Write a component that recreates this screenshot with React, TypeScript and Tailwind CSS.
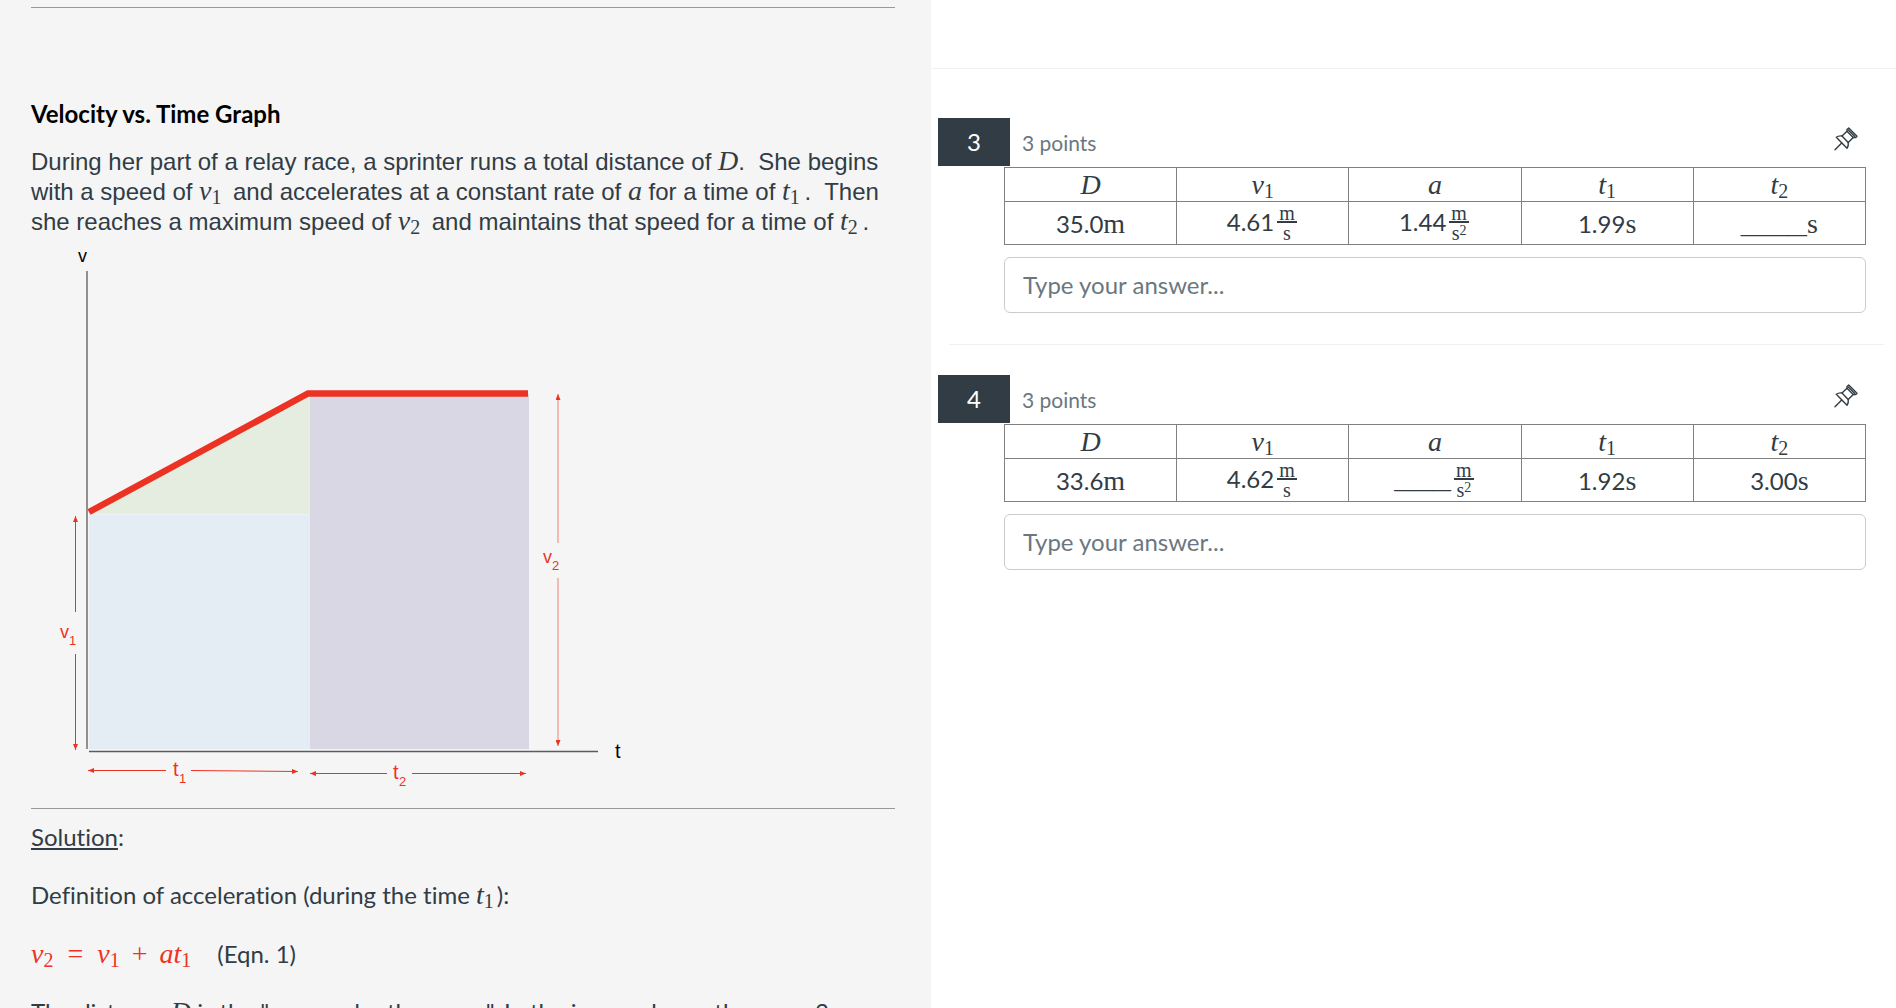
import { useState } from "react";
import type { ReactNode } from "react";

interface Question {
  number: number;
  points: number;
  values: ReactNode[];
}

function Sym({ name, sub }: { name: string; sub?: string }) {
  return (
    <span className="whitespace-nowrap font-['Liberation_Serif',serif] text-[28px] leading-none">
      <i>{name}</i>
      {sub && <span className="inline-block align-[-4px] text-xl leading-none">{sub}</span>}
    </span>
  );
}

function Unit({ children }: { children: ReactNode }) {
  return <span className="font-['Liberation_Serif',serif] text-[28px] leading-none">{children}</span>;
}

function Blank({ children }: { children: ReactNode }) {
  return <span className="font-['Liberation_Sans',sans-serif] text-[17px] leading-none">{children}</span>;
}

function Fraction({ top, bottom }: { top: ReactNode; bottom: ReactNode }) {
  return (
    <span className="mr-0.5 ml-[3px] inline-flex flex-col items-stretch pb-[3px] align-[11px] text-center font-['Liberation_Serif',serif] text-xl leading-4">
      <span className="border-b-2 border-[#313c45] px-0.5">{top}</span>
      <span className="pt-0.5">{bottom}</span>
    </span>
  );
}

const HEADERS = [
  <Sym name="D" />,
  <Sym name="v" sub="1" />,
  <Sym name="a" />,
  <Sym name="t" sub="1" />,
  <Sym name="t" sub="2" />,
];

const SECOND_SQUARED = (
  <>
    s<span className="inline-block align-[5px] text-sm leading-0">2</span>
  </>
);

const QUESTIONS: Question[] = [
  {
    number: 3,
    points: 3,
    values: [
      <>35.0<Unit>m</Unit></>,
      <>4.61<Fraction top="m" bottom="s" /></>,
      <>1.44<Fraction top="m" bottom={SECOND_SQUARED} /></>,
      <>1.99<Unit>s</Unit></>,
      <><Blank>_______</Blank><Unit>s</Unit></>,
    ],
  },
  {
    number: 4,
    points: 3,
    values: [
      <>33.6<Unit>m</Unit></>,
      <>4.62<Fraction top="m" bottom="s" /></>,
      <><Blank>______</Blank><Fraction top="m" bottom={SECOND_SQUARED} /></>,
      <>1.92<Unit>s</Unit></>,
      <>3.00<Unit>s</Unit></>,
    ],
  },
];

function PinIcon() {
  return (
    <svg
      width="24"
      height="24"
      viewBox="0 0 24 24"
      fill="none"
      stroke="currentColor"
      strokeWidth="1.4"
      strokeLinejoin="round"
      strokeLinecap="round"
      aria-hidden="true"
    >
      <path d="M1 22.7 7.7 16" />
      <path d="M2.3 10.3C4 9 6 8.7 8 9l6.2 6.4c.4 2.2 0 4.2-1.2 5.9z" />
      <path d="M8 9l5-4.7M14.2 15.4l5-4.9" />
      <path d="M14.7 1 23 9.2l-1.2 1.3h-2.6L13 4.3V2.6z" />
      <path d="M14.3 2.9l6.5 6.5" />
    </svg>
  );
}

function VelocityGraph() {
  return (
    <svg
      className="mt-[3px] block w-full max-w-[640px]"
      viewBox="31 240 640 560"
      role="img"
      aria-label="Velocity vs. time graph"
      fontFamily="Liberation Sans, sans-serif"
    >
      <defs>
        <marker id="arrow" markerUnits="userSpaceOnUse" markerWidth="6" markerHeight="5" refX="6" refY="2.5" orient="auto-start-reverse">
          <path d="M0 0 6 2.5 0 5z" fill="#ec3323" />
        </marker>
      </defs>

      <rect x="89" y="514" width="221" height="235" fill="#e5edf4" />
      <path d="M90 514 310 394V514z" fill="#e5ece0" />
      <path d="M89 514.5H310" stroke="#f0f2f2" />
      <rect x="310" y="394" width="219" height="355" fill="#d9d7e4" />
      <path d="M309.5 394V749" stroke="#ebebf0" />

      <path d="M87 271V749" stroke="#6e6e6e" strokeWidth="1.5" />
      <path d="M89 751.5H598" stroke="#5c5c5c" strokeWidth="1.3" />
      <path d="M89 512 308 393.5H528" fill="none" stroke="#ec3323" strokeWidth="6.5" />

      <g stroke="#ec3323" strokeWidth="1">
        <path d="M75.5 612V516" markerEnd="url(#arrow)" />
        <path d="M75.5 654V750" markerEnd="url(#arrow)" />
        <path d="M558 543V394" strokeOpacity="0.6" markerEnd="url(#arrow)" />
        <path d="M558 578V746" strokeOpacity="0.6" markerEnd="url(#arrow)" />
        <path d="M166 770.5H88" markerEnd="url(#arrow)" />
        <path d="M191 770.5 298 771.5" markerEnd="url(#arrow)" />
        <path d="M387 773.5H310" markerEnd="url(#arrow)" />
        <path d="M412 773.5H526" markerEnd="url(#arrow)" />
      </g>

      <text x="78" y="262" fontSize="18">v</text>
      <text x="615" y="758" fontSize="20">t</text>

      <g fill="#ec3323">
        <text x="60" y="638" fontSize="18">v</text>
        <text x="69" y="645" fontSize="13">1</text>
        <text x="543" y="563" fontSize="18">v</text>
        <text x="552" y="570" fontSize="13">2</text>
        <text x="173" y="776" fontSize="20">t</text>
        <text x="179" y="783" fontSize="13">1</text>
        <text x="393" y="779" fontSize="20">t</text>
        <text x="399" y="786" fontSize="13">2</text>
      </g>
    </svg>
  );
}

function QuestionCard({ question }: { question: Question }) {
  const [answer, setAnswer] = useState("");
  const [pinned, setPinned] = useState(false);

  return (
    <article className="pl-[7px]">
      <header className="flex items-center">
        <h2 className="flex h-12 w-[72px] items-center justify-center bg-[#313c45] text-2xl text-white">
          {question.number}
        </h2>
        <span className="ml-3 pt-0.5 text-[21px] leading-7 text-[#6b7780]">{question.points} points</span>
        <button
          type="button"
          className="mr-[38px] mb-1.5 ml-auto cursor-pointer"
          aria-label="Pin question"
          aria-pressed={pinned}
          onClick={() => setPinned(!pinned)}
        >
          <PinIcon />
        </button>
      </header>
      <div className="mt-px mr-[30px] ml-[66px]">
        <table className="w-full table-fixed border-collapse text-center">
          <thead>
            <tr className="h-[34px]">
              {HEADERS.map((header, i) => (
                <th key={i} className="border border-[#808080] p-0 font-normal leading-8">
                  {header}
                </th>
              ))}
            </tr>
          </thead>
          <tbody>
            <tr className="h-[43px]">
              {question.values.map((value, i) => (
                <td key={i} className="border border-[#808080] p-0 pt-0.5 leading-7">
                  {value}
                </td>
              ))}
            </tr>
          </tbody>
        </table>
        <input
          type="text"
          className="mt-3 block h-14 w-full rounded-md border border-[#c7cdd1] px-[18px] pb-0.5 text-2xl placeholder:text-[#6b7780]"
          placeholder="Type your answer..."
          aria-label={`Answer to question ${question.number}`}
          value={answer}
          onChange={(event) => setAnswer(event.target.value)}
        />
      </div>
    </article>
  );
}

export default function App() {
  return (
    <div className="flex h-screen overflow-hidden bg-white font-[Lato,sans-serif] text-2xl text-[#313c45] [font-variant-ligatures:none]">
      <section className="w-[49.1%] shrink-0 overflow-hidden bg-[#f5f5f5] pt-[7px] pr-9 pl-[31px]">
        <hr className="border-[#999999]" />
        <h1 className="mt-[90px] font-bold leading-8 text-black">Velocity vs. Time Graph</h1>
        <p className="mt-[17px] font-['Liberation_Sans',sans-serif] leading-[30px]">
          During her part of a relay race, a sprinter runs a total distance of <Sym name="D" />.&nbsp; She begins
          with a speed of <Sym name="v" sub="1" />&thinsp; and accelerates at a constant rate of <Sym name="a" /> for
          a time of <Sym name="t" sub="1" />&thinsp;.&nbsp; Then she reaches a maximum speed of{" "}
          <Sym name="v" sub="2" />&thinsp; and maintains that speed for a time of <Sym name="t" sub="2" />&thinsp;.
        </p>
        <VelocityGraph />
        <hr className="mt-2 border-[#999999]" />
        <p className="mt-[10px] leading-9">
          <u className="underline-offset-2">Solution</u>:
        </p>
        <p className="mt-[22px] leading-9">
          Definition of acceleration (during the time <Sym name="t" sub="1" />&thinsp;):
        </p>
        <p className="mt-[23px] leading-9">
          <span className="mr-[26px] text-[#ec3323]">
            <Sym name="v" sub="2" />
            <span className="mx-3.5">
              <Unit>=</Unit>
            </span>
            <Sym name="v" sub="1" />
            <span className="mx-3">
              <Unit>+</Unit>
            </span>
            <Sym name="a" />
            <Sym name="t" sub="1" />
          </span>
          (Eqn. 1)
        </p>
        <p className="mt-[22px] leading-9">
          The distance <Sym name="D" /> is the "area under the curve". In the image above, there are 3 areas.
        </p>
      </section>

      <main className="min-w-0 flex-1 pt-[68px]">
        <hr className="border-[#f0f1f2]" />
        <div className="pt-[49px]">
          <QuestionCard question={QUESTIONS[0]} />
          <hr className="mt-[31px] mr-3 mb-[30px] ml-[18px] border-[#f0f1f2]" />
          <QuestionCard question={QUESTIONS[1]} />
        </div>
      </main>
    </div>
  );
}
